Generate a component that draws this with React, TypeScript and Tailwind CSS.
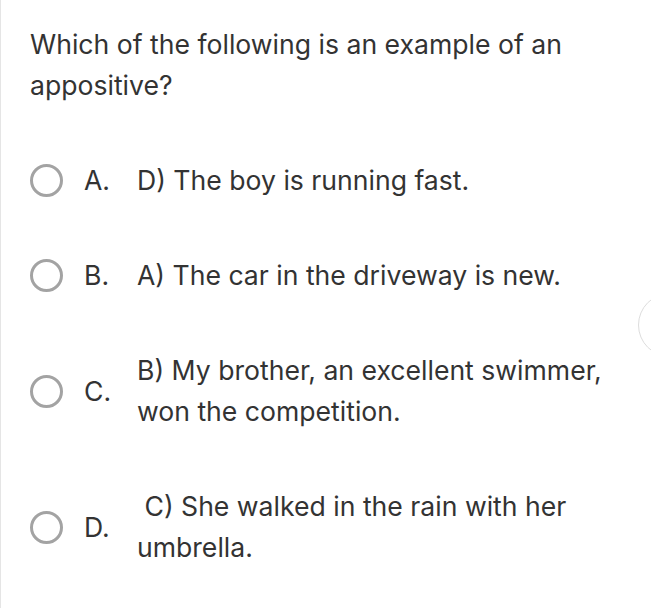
import React from "react";

const options = [
  { letter: "A.", text: "D) The boy is running fast." },
  { letter: "B.", text: "A) The car in the driveway is new." },
  { letter: "C.", text: "B) My brother, an excellent swimmer, won the competition." },
  { letter: "D.", text: "\u00a0C) She walked in the rain with her umbrella." },
];

export default function App() {
  return (
    <div
      className="relative w-[651px] h-[608px] overflow-hidden bg-white border-l border-[#e5e5e5] text-[#333333]"
      style={{ fontFamily: "Inter, 'Noto Sans', sans-serif" }}
    >
      <div className="pl-[29px] pr-[30px] pt-[24px]">
        <p className="text-[26.6px] leading-[41px]">
          Which of the following is an example of an appositive?
        </p>
        <div className="mt-[54px] flex flex-col gap-[54px]">
          {options.map((o) => (
            <div key={o.letter} className="flex items-center">
              <div className="w-[33px] h-[33px] rounded-full border-[3px] border-[#a3a3a3] shrink-0" />
              <div className="w-[53px] ml-[21px] shrink-0 text-[26.6px] leading-[41px]">{o.letter}</div>
              <div className="flex-1 text-[26.6px] leading-[41px]">{o.text}</div>
            </div>
          ))}
        </div>
      </div>
      <div className="absolute left-[637px] top-[293px] w-[64px] h-[64px] rounded-full border border-[#dddddd]" />
    </div>
  );
}
